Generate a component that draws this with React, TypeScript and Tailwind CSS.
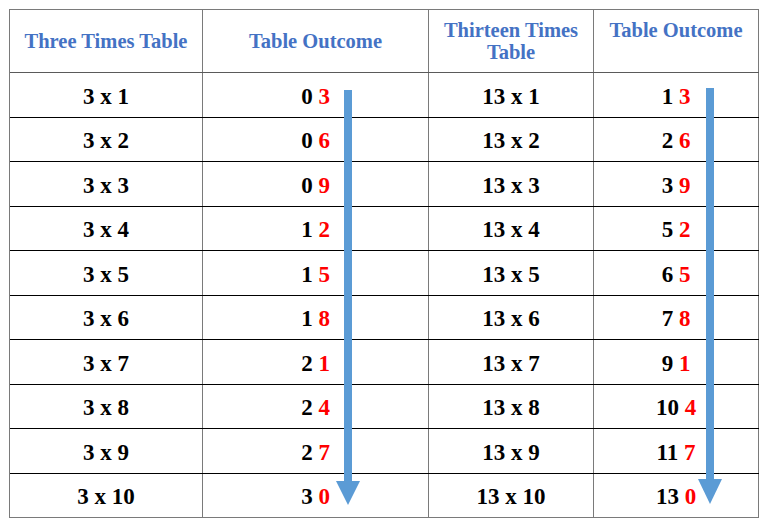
import React from "react";

const rowHeights = ["h-[45px]", "h-[44px]", "h-[45px]", "h-[44px]", "h-[45px]", "h-[44px]", "h-[45px]", "h-[44px]", "h-[45px]", "h-[44px]"];

const rows = Array.from({ length: 10 }, (_, i) => {
  const n = i + 1;
  const a = 3 * n;
  const b = 13 * n;
  return {
    three: `3 x ${n}`,
    threeTens: String(Math.floor(a / 10)),
    threeOnes: String(a % 10),
    thirteen: `13 x ${n}`,
    thirteenTens: String(Math.floor(b / 10)),
    thirteenOnes: String(b % 10),
  };
});

const Outcome = ({ tens, ones }: { tens: string; ones: string }) => (
  <span>
    <span className="text-black">{tens}</span>{" "}
    <span className="text-[#ff0000]">{ones}</span>
  </span>
);

const App = () => {
  return (
    <div className="relative w-[768px] h-[526px] bg-white overflow-hidden font-['Liberation_Serif','Times_New_Roman',serif]">
      <div className="ml-[9px] pt-[9px]">
        <div className="w-[750px] border-l border-t border-[#7a7a7a] font-bold">
          <div className="flex h-[63px] border-b border-b-[#5a5a5a] text-[20.5px] leading-[22px] text-[#4472c4]">
            <div className="w-[193px] border-r border-[#7a7a7a] flex items-center justify-center">
              Three Times Table
            </div>
            <div className="w-[226px] border-r border-[#7a7a7a] flex items-center justify-center">
              Table Outcome
            </div>
            <div className="w-[165px] border-r border-[#7a7a7a] pt-[9px] text-center">
              Thirteen Times
              <br />
              Table
            </div>
            <div className="w-[165px] border-r border-[#7a7a7a] pt-[9px] text-center">
              Table Outcome
            </div>
          </div>
          {rows.map((r, i) => (
            <div
              key={r.three}
              className={`flex ${rowHeights[i]} border-b ${i === 9 ? "border-b-[#7a7a7a]" : "border-b-black"} text-[23px] text-black`}
            >
              <div className="w-[193px] border-r border-[#7a7a7a] pt-[4px] flex items-center justify-center">
                {r.three}
              </div>
              <div className="w-[226px] border-r border-[#7a7a7a] pt-[4px] flex items-center justify-center">
                <Outcome tens={r.threeTens} ones={r.threeOnes} />
              </div>
              <div className="w-[165px] border-r border-[#7a7a7a] pt-[4px] flex items-center justify-center">
                {r.thirteen}
              </div>
              <div className="w-[165px] border-r border-[#7a7a7a] pt-[4px] flex items-center justify-center">
                <Outcome tens={r.thirteenTens} ones={r.thirteenOnes} />
              </div>
            </div>
          ))}
        </div>
      </div>
      <svg className="absolute left-0 top-0 pointer-events-none" width="768" height="526" viewBox="0 0 768 526">
        <rect x="344" y="90" width="8" height="392" fill="#5b9bd5" />
        <polygon points="336,481 360,481 348,505" fill="#5b9bd5" />
        <rect x="706" y="88" width="8" height="392" fill="#5b9bd5" />
        <polygon points="698,479 722,479 710,504" fill="#5b9bd5" />
      </svg>
    </div>
  );
};

export default App;
